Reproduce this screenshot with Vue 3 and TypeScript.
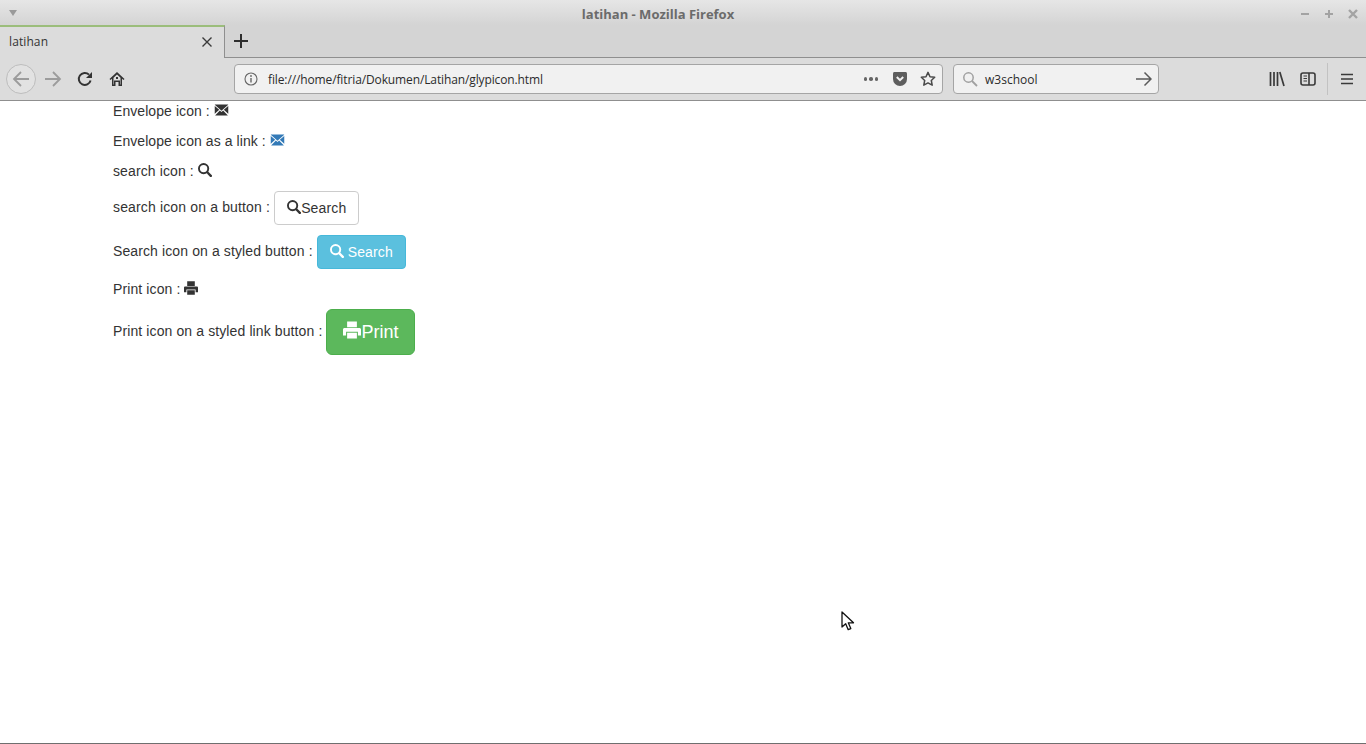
<template>
  <div class="window">
    <header class="titlebar">
      <span class="menu-arrow"></span>
      <span class="title">latihan - Mozilla Firefox</span>
      <div class="win-buttons">
        <svg width="12" height="12" viewBox="0 0 12 12"><path d="M2 6h8" stroke="#a3a3a3" stroke-width="2" /></svg>
        <svg width="12" height="12" viewBox="0 0 12 12"><path d="M2 6h8M6 2v8" stroke="#a3a3a3" stroke-width="2" /></svg>
        <svg width="12" height="12" viewBox="0 0 12 12"><path d="M2 2l8 8M10 2l-8 8" stroke="#a3a3a3" stroke-width="2.4" /></svg>
      </div>
    </header>

    <div class="tabbar">
      <div class="tab">
        <span class="tab-label">latihan</span>
        <svg class="tab-close" width="12" height="12" viewBox="0 0 12 12"><path d="M1.5 1.5l9 9M10.5 1.5l-9 9" stroke="#3a3a3a" stroke-width="1.4" /></svg>
      </div>
      <button class="new-tab">
        <svg width="14" height="14" viewBox="0 0 14 14"><path d="M7 0v14M0 7h14" stroke="#2e2e2e" stroke-width="2" /></svg>
      </button>
    </div>

    <nav class="navbar">
      <div class="back-circle">
        <svg width="18" height="18" viewBox="0 0 18 18"><path d="M17 9H2M9 2L2 9l7 7" fill="none" stroke="#9c9c9c" stroke-width="1.8" /></svg>
      </div>
      <svg class="forward" width="18" height="18" viewBox="0 0 18 18"><path d="M1 9h15M9 2l7 7-7 7" fill="none" stroke="#9c9c9c" stroke-width="1.8" /></svg>
      <svg class="reload" width="16" height="16" viewBox="0 0 16 16"><path d="M13.6 9.5A6 6 0 1 1 12 3.6" fill="none" stroke="#333" stroke-width="2" /><path d="M15 1v6H9z" fill="#333" /></svg>
      <svg class="home" width="16" height="16" viewBox="0 0 16 16"><path d="M8 1L.5 8l1 1L3 7.700V15h3.500v-4h3v4H13V7.700L14.500 9l1-1z" fill="#333" /><path d="M8 3.500L4.500 6.700V13.500H5V9.500h6v4h.5V6.700z" fill="#dcdcdc" /><rect x="7" y="6" width="2" height="2" fill="#333" /></svg>

      <div class="urlbar">
        <svg class="info" width="14" height="14" viewBox="0 0 14 14"><circle cx="7" cy="7" r="6" fill="none" stroke="#666" stroke-width="1.1" /><path d="M7 6v4.500" stroke="#666" stroke-width="1.400" /><circle cx="7" cy="4" r="0.900" fill="#666" /></svg>
        <span class="url">file:///home/fitria/Dokumen/Latihan/glypicon.html</span>
        <div class="dots"><i></i><i></i><i></i></div>
        <svg class="pocket" width="16" height="16" viewBox="0 0 16 16"><path d="M1 2.500C1 1.700 1.600 1 2.500 1h11c.9 0 1.500.7 1.500 1.500V8A7 7 0 0 1 1 8z" fill="#5e5e5e" /><path d="M4.800 6L8 9.200 11.200 6" fill="none" stroke="#f2f2f2" stroke-width="2" /></svg>
        <svg class="star" width="16" height="16" viewBox="0 0 16 16"><path d="M8 1.400l2 4.300 4.700.6-3.400 3.200.9 4.700L8 11.900l-4.200 2.300.9-4.700-3.400-3.200 4.700-.6z" fill="none" stroke="#4a4a4a" stroke-width="1.500" stroke-linejoin="round" /></svg>
      </div>

      <div class="searchbar">
        <svg class="search-glass" width="16" height="16" viewBox="0 0 16 16"><circle cx="6.500" cy="6.500" r="4.700" fill="none" stroke="#a0a0a0" stroke-width="1.500" /><path d="M10 10l5 5" stroke="#a0a0a0" stroke-width="1.800" /></svg>
        <span class="search-text">w3school</span>
        <svg class="go" width="16" height="16" viewBox="0 0 16 16"><path d="M0 8h15M8.500 1.500L15 8l-6.500 6.500" fill="none" stroke="#5a5a5a" stroke-width="1.500" /></svg>
      </div>

      <div class="tools">
        <svg width="16" height="16" viewBox="0 0 16 16"><path d="M1.500 1v14M5 1v14M8.500 1v14" stroke="#3a3a3a" stroke-width="1.700" /><path d="M10.800 1l4.200 14" stroke="#3a3a3a" stroke-width="1.700" /></svg>
        <svg width="16" height="16" viewBox="0 0 16 16"><rect x="1" y="2" width="14" height="12" rx="2" fill="none" stroke="#3a3a3a" stroke-width="1.600" /><path d="M9 2v12" stroke="#3a3a3a" stroke-width="1.600" /><path d="M3.500 5H7M3.500 7.500H7M3.500 10H7" stroke="#3a3a3a" stroke-width="1" /></svg>
        <span class="tool-sep"></span>
        <svg width="14" height="14" viewBox="0 0 14 14"><path d="M1 2.500h12M1 7h12M1 11.500h12" stroke="#3a3a3a" stroke-width="1.700" /></svg>
      </div>
    </nav>

    <main class="page">
      <div class="container">
        <p class="tight">Envelope icon : <svg class="glyph" width="15" height="14" viewBox="0 0 14 14"><use href="#g-envelope" /></svg></p>
        <p class="tight">Envelope icon as a link : <a class="link" href="#"><svg class="glyph" width="15" height="14" viewBox="0 0 14 14"><use href="#g-envelope" /></svg></a></p>
        <p>search icon : <svg class="glyph" width="14" height="14" viewBox="0 0 14 14"><use href="#g-search" /></svg></p>
        <p class="wide">search icon on a button : <button class="btn btn-default"><svg class="glyph" width="14" height="14" viewBox="0 0 14 14"><use href="#g-search" /></svg>Search</button></p>
        <p>Search icon on a styled button : <button class="btn btn-info"><svg class="glyph" width="14" height="14" viewBox="0 0 14 14"><use href="#g-search" /></svg> Search</button></p>
        <p>Print icon : <svg class="glyph" width="14" height="14" viewBox="0 0 14 14"><use href="#g-print" /></svg></p>
        <p>Print icon on a styled link button : <a class="btn btn-success btn-lg" href="#"><svg class="glyph" width="18" height="18" viewBox="0 0 14 14"><use href="#g-print" /></svg>Print</a></p>
      </div>
      <svg class="cursor" width="14" height="21" viewBox="0 0 14 21"><path d="M1 1v15l3.700-3.300 2.500 6 2.600-1.100-2.500-5.800H12.500z" fill="#fff" stroke="#111" stroke-width="1.300" stroke-linejoin="round" /></svg>
    </main>

    <svg class="defs" width="0" height="0">
      <defs>
        <symbol id="g-envelope" viewBox="0 0 14 14">
          <path d="M0 1.500h14L7 7.800zM0 2.700v8.400L4.700 6.700zM14 2.700v8.400L9.300 6.700zM.6 12.500l4.800-5L7 9l1.600-1.500 4.800 5z" fill="currentColor" />
        </symbol>
        <symbol id="g-search" viewBox="0 0 14 14">
          <path d="M5.600 0a5.600 5.600 0 1 0 0 11.200A5.600 5.600 0 0 0 5.600 0zm0 1.900a3.700 3.700 0 1 1 0 7.400 3.700 3.700 0 0 1 0-7.400z" fill="currentColor" fill-rule="evenodd" />
          <path d="M9.500 9.500l3.300 3.300" stroke="currentColor" stroke-width="2.400" stroke-linecap="round" />
        </symbol>
        <symbol id="g-print" viewBox="0 0 14 14">
          <path d="M3.200.3h7.600v4.600H3.200zM1.200 5.400h11.600c.7 0 1.200.5 1.200 1.200v4.600h-2.400V8.400H2.400v2.800H0V6.600c0-.7.500-1.200 1.200-1.200zM3.200 9.200h7.600v4.500H3.200z" fill="currentColor" />
        </symbol>
      </defs>
    </svg>
  </div>
</template>

<script setup lang="ts">
</script>

<style>
html,
body {
  margin: 0;
  height: 100%;
  overflow: hidden;
}
</style>

<style scoped>
.window {
  height: 744px;
  display: flex;
  flex-direction: column;
  font-family: "Liberation Sans", Arial, sans-serif;
  background: #fff;
  border-bottom: 1px solid #6f6f6f;
  box-sizing: border-box;
}

.defs {
  position: absolute;
}

.titlebar {
  height: 25px;
  flex: none;
  display: flex;
  align-items: center;
  justify-content: center;
  position: relative;
  padding-right: 50px;
  padding-top: 2px;
  box-sizing: border-box;
  background: linear-gradient(#e6e6e6, #d4d4d4);
}

.menu-arrow {
  position: absolute;
  left: 9px;
  top: 10px;
  border-left: 4px solid transparent;
  border-right: 4px solid transparent;
  border-top: 6px solid #9a9a9a;
}

.title {
  font-family: "Open Sans", "Noto Sans", sans-serif;
  font-size: 13px;
  font-weight: 700;
  color: #6b6b6b;
}

.win-buttons {
  position: absolute;
  right: 7px;
  top: 8px;
  display: flex;
  gap: 12px;
}

.tabbar {
  height: 33px;
  flex: none;
  display: flex;
  background: #d4d4d4;
  border-bottom: 1px solid #8f8f8f;
  box-sizing: border-box;
}

.tab {
  width: 225px;
  height: 33px;
  flex: none;
  box-sizing: border-box;
  display: flex;
  align-items: center;
  justify-content: space-between;
  padding: 0 11px 2px 9px;
  background: #dcdcdc;
  border-top: 2px solid #9bbd7b;
  border-right: 1px solid #8f8f8f;
}

.tab-label {
  font-family: "Open Sans", "Noto Sans", sans-serif;
  font-size: 12px;
  letter-spacing: 0.1px;
  color: #333;
}

.new-tab {
  width: 32px;
  height: 32px;
  padding: 0;
  border: 0;
  background: none;
  display: flex;
  align-items: center;
  justify-content: center;
}

.navbar {
  height: 43px;
  flex: none;
  display: flex;
  align-items: center;
  box-sizing: border-box;
  padding-left: 6px;
  background: #dcdcdc;
  border-bottom: 1px solid #8f8f8f;
}

.back-circle {
  width: 30px;
  height: 30px;
  box-sizing: border-box;
  border: 1px solid #bdbdbd;
  border-radius: 50%;
  background: #e2e2e2;
  display: flex;
  align-items: center;
  justify-content: center;
}

.forward {
  margin-left: 8px;
}

.reload {
  margin-left: 15px;
}

.home {
  margin-left: 16px;
}

.urlbar,
.searchbar {
  height: 30px;
  box-sizing: border-box;
  display: flex;
  align-items: center;
  background: #f1f1f1;
  border: 1px solid #a5a5a5;
  border-radius: 4px;
}

.urlbar {
  width: 709px;
  margin-left: 109px;
  padding: 0 6px 0 9px;
}

.info {
  flex: none;
}

.url,
.search-text {
  font-family: "Open Sans", "Noto Sans", sans-serif;
  font-size: 12px;
  color: #2b2b2b;
  white-space: nowrap;
}

.url {
  margin-left: 10px;
  flex: 1;
  letter-spacing: -0.12px;
}

.dots {
  display: flex;
  gap: 2px;
  margin-right: 3px;
}

.dots i {
  width: 3.500px;
  height: 3.500px;
  border-radius: 50%;
  background: #666;
}

.pocket {
  margin-left: 11px;
}

.star {
  margin-left: 12px;
}

.searchbar {
  width: 206px;
  margin-left: 10px;
  padding: 0 6px 0 8px;
}

.search-text {
  margin-left: 7px;
  flex: 1;
}

.tools {
  display: flex;
  align-items: center;
  margin-left: 110px;
}

.tools svg:nth-child(2) {
  margin-left: 15px;
}

.tool-sep {
  width: 1px;
  height: 32px;
  background: #c2c2c2;
  margin: 0 12px 0 11px;
}

.page {
  flex: 1;
  position: relative;
  overflow: hidden;
  color: #333;
  font-size: 14px;
  line-height: 20px;
}

.container {
  padding-left: 113px;
}

p {
  margin: 0 0 10px;
  letter-spacing: 0.11px;
}

p.tight {
  letter-spacing: 0.07px;
}

p.wide {
  letter-spacing: 0.15px;
}

.glyph {
  vertical-align: -1px;
}

.link {
  color: #337ab7;
}

.btn {
  display: inline-block;
  box-sizing: border-box;
  padding: 6px 12px;
  font-family: inherit;
  font-size: 14px;
  line-height: 20px;
  letter-spacing: 0.15px;
  text-align: center;
  vertical-align: middle;
  text-decoration: none;
  border: 1px solid transparent;
  border-radius: 4px;
}

.btn-default {
  color: #333;
  background: #fff;
  border-color: #ccc;
}

.btn-info {
  color: #fff;
  background: #5bc0de;
  border-color: #46b8da;
}

.btn-success {
  color: #fff;
  background: #5cb85c;
  border-color: #4cae4c;
  letter-spacing: 0;
}

.btn-lg {
  padding: 10px 16px;
  font-size: 18px;
  line-height: 24px;
  border-radius: 6px;
}

.cursor {
  position: absolute;
  left: 841px;
  top: 510px;
}
</style>
